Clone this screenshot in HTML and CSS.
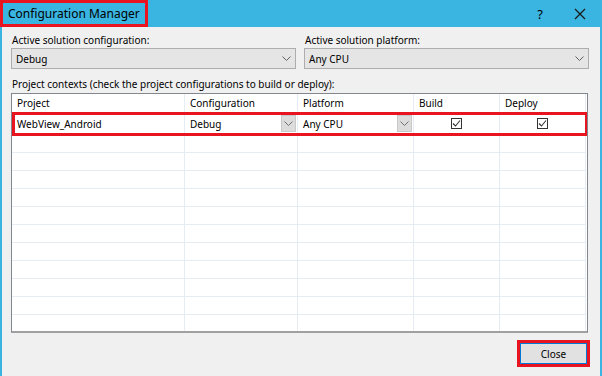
FILE: index.html
```html
<!DOCTYPE html>
<html>
<head>
<meta charset="utf-8">
<link rel="stylesheet" href="styles.css">
</head>
<body>
<div class="window">
  <div class="titlebar">
    <span class="title">Configuration Manager</span>
    <span class="title-mark"></span>
    <span class="tb-btn help">?</span>
    <span class="tb-btn close-x">
      <svg width="12" height="12" viewBox="0 0 12 12"><path d="M1 1L11 11M11 1L1 11" stroke="#1a1a1a" stroke-width="1.3" fill="none"/></svg>
    </span>
  </div>
  <div class="client">
    <div class="top">
      <div class="field">
        <label class="lbl">Active solution configuration:</label>
        <div class="combo"><span>Debug</span>
          <svg class="chev" width="9" height="5" viewBox="0 0 9 5"><path d="M0.5 0.5L4.5 4.5L8.5 0.5" stroke="#606060" fill="none"/></svg>
        </div>
      </div>
      <div class="field">
        <label class="lbl">Active solution platform:</label>
        <div class="combo"><span>Any CPU</span>
          <svg class="chev" width="9" height="5" viewBox="0 0 9 5"><path d="M0.5 0.5L4.5 4.5L8.5 0.5" stroke="#606060" fill="none"/></svg>
        </div>
      </div>
    </div>
    <div class="lbl contexts">Project contexts (check the project configurations to build or deploy):</div>
    <div class="grid">
      <div class="row head">
        <div class="cell">Project</div>
        <div class="cell">Configuration</div>
        <div class="cell">Platform</div>
        <div class="cell">Build</div>
        <div class="cell">Deploy</div>
        <div class="cell"></div>
      </div>
      <div class="row data">
        <div class="cell">WebView_Android</div>
        <div class="cell dd"><span>Debug</span><span class="ddbtn"><svg width="9" height="5" viewBox="0 0 9 5"><path d="M0.5 0.5L4.5 4.5L8.5 0.5" stroke="#707070" fill="none"/></svg></span></div>
        <div class="cell dd"><span>Any CPU</span><span class="ddbtn"><svg width="9" height="5" viewBox="0 0 9 5"><path d="M0.5 0.5L4.5 4.5L8.5 0.5" stroke="#707070" fill="none"/></svg></span></div>
        <div class="cell center"><span class="cb"><svg width="9" height="9" viewBox="0 0 9 9"><path d="M1 4.5L3.5 7L8 1.5" stroke="#333" stroke-width="1.1" fill="none"/></svg></span></div>
        <div class="cell center"><span class="cb"><svg width="9" height="9" viewBox="0 0 9 9"><path d="M1 4.5L3.5 7L8 1.5" stroke="#333" stroke-width="1.1" fill="none"/></svg></span></div>
        <div class="cell"></div>
      </div>
      <div class="row empty"><div class="cell"></div><div class="cell"></div><div class="cell"></div><div class="cell"></div><div class="cell"></div><div class="cell"></div></div>
      <div class="row empty"><div class="cell"></div><div class="cell"></div><div class="cell"></div><div class="cell"></div><div class="cell"></div><div class="cell"></div></div>
      <div class="row empty"><div class="cell"></div><div class="cell"></div><div class="cell"></div><div class="cell"></div><div class="cell"></div><div class="cell"></div></div>
      <div class="row empty"><div class="cell"></div><div class="cell"></div><div class="cell"></div><div class="cell"></div><div class="cell"></div><div class="cell"></div></div>
      <div class="row empty"><div class="cell"></div><div class="cell"></div><div class="cell"></div><div class="cell"></div><div class="cell"></div><div class="cell"></div></div>
      <div class="row empty"><div class="cell"></div><div class="cell"></div><div class="cell"></div><div class="cell"></div><div class="cell"></div><div class="cell"></div></div>
      <div class="row empty"><div class="cell"></div><div class="cell"></div><div class="cell"></div><div class="cell"></div><div class="cell"></div><div class="cell"></div></div>
      <div class="row empty"><div class="cell"></div><div class="cell"></div><div class="cell"></div><div class="cell"></div><div class="cell"></div><div class="cell"></div></div>
      <div class="row empty"><div class="cell"></div><div class="cell"></div><div class="cell"></div><div class="cell"></div><div class="cell"></div><div class="cell"></div></div>
      <div class="row empty"><div class="cell"></div><div class="cell"></div><div class="cell"></div><div class="cell"></div><div class="cell"></div><div class="cell"></div></div>
      <div class="row empty"><div class="cell"></div><div class="cell"></div><div class="cell"></div><div class="cell"></div><div class="cell"></div><div class="cell"></div></div>
    </div>
    <div class="footer">
      <div class="btn-mark"><button class="btn">Close</button></div>
    </div>
  </div>
</div>
</body>
</html>
```
FILE: styles.css
```css
html, body {
  margin: 0;
  padding: 0;
}
body {
  font-family: "Noto Sans", "Segoe UI", sans-serif;
  font-size: 10px;
  color: #000;
  background: #f0f0f0;
}
.window {
  width: 602px;
  height: 376px;
  background: #3ab4e0;
  display: flex;
  flex-direction: column;
  position: relative;
  overflow: hidden;
}
.titlebar {
  height: 27px;
  display: flex;
  align-items: center;
  position: relative;
  flex: none;
}
.title {
  padding-left: 8px;
  font-size: 12px;
  color: #000;
  flex: 1;
}
.title-mark {
  position: absolute;
  left: 0;
  top: 0;
  width: 148px;
  height: 27px;
  box-sizing: border-box;
  border: 3px solid #e8141f;
}
.tb-btn {
  width: 38px;
  display: flex;
  justify-content: center;
  align-items: center;
}
.help {
  font-size: 13px;
  margin-right: 2px;
}
.close-x {
  margin-right: 3px;
}
.client {
  flex: 1;
  background: #f0f0f0;
  margin: 0 2px;
  padding: 6px 12px 0 9px;
  display: flex;
  flex-direction: column;
}
.top {
  display: grid;
  grid-template-columns: 285px 285px;
  column-gap: 8px;
}
.field {
  display: flex;
  flex-direction: column;
}
.lbl {
  display: block;
  height: 15px;
  line-height: 15px;
  padding-left: 1px;
  margin-bottom: 0;
}
.combo {
  margin-top: 0;
  height: 21px;
  box-sizing: border-box;
  border: 1px solid #adadad;
  background: #e5e5e5;
  display: flex;
  align-items: center;
  justify-content: space-between;
  padding: 0 4px 0 4px;
}
.contexts {
  margin-top: 8px;
}
.grid {
  margin-top: 1px;
  height: 240px;
  flex: none;
  box-sizing: border-box;
  border: 1px solid #828790;
  border-bottom: 2px solid #a0a0a0;
  background: #fff;
  overflow: hidden;
}
.row {
  display: grid;
  grid-template-columns: 173px 113px 116px 86px 86px 1fr;
}
.cell {
  border-right: 1px solid #e6ecf3;
  border-bottom: 1px solid #e6ecf3;
  box-sizing: border-box;
  display: flex;
  align-items: center;
  padding-left: 5px;
}
.row .cell:last-child {
  border-right: none;
  border-bottom: none;
}
.head {
  height: 19px;
}
.data {
  height: 22px;
  position: relative;
}
.data::after {
  content: "";
  position: absolute;
  left: 0;
  top: -1px;
  width: 576px;
  height: 24px;
  box-sizing: border-box;
  border: 3px solid #e8141f;
}
.empty {
  height: 18px;
}
.dd {
  justify-content: space-between;
  padding-right: 0;
}
.ddbtn {
  width: 15px;
  height: 17px;
  background: #dcdcdc;
  border: 1px solid #c8c8c8;
  box-sizing: border-box;
  display: flex;
  align-items: center;
  justify-content: center;
  margin-right: 1px;
}
.center {
  justify-content: center;
  padding-left: 0;
}
.cb {
  width: 11px;
  height: 11px;
  box-sizing: border-box;
  border: 1px solid #333;
  background: #fff;
  display: flex;
  align-items: center;
  justify-content: center;
}
.footer {
  display: flex;
  justify-content: flex-end;
  padding-top: 7px;
}
.btn-mark {
  border: 3px solid #e8141f;
  margin-right: -2px;
}
.btn {
  width: 67px;
  height: 21px;
  box-sizing: border-box;
  border: 1px solid #0078d7;
  background: #e1e1e1;
  font-family: "Noto Sans", "Segoe UI", sans-serif;
  font-size: 10px;
  color: #000;
  padding: 0;
  box-shadow: inset 0 0 0 1px #e1e1e1;
}
```
